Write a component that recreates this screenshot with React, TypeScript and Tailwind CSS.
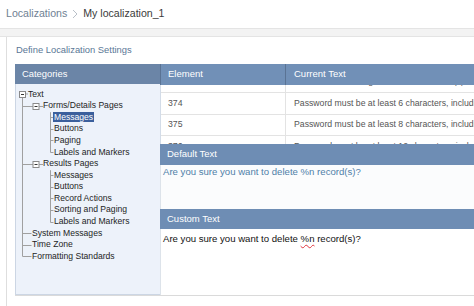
import React from "react";

type Node = { label: string; level: 0 | 1 | 2; expandable?: boolean; selected?: boolean };

const nodes: Node[] = [
  { label: "Text", level: 0, expandable: true },
  { label: "Forms/Details Pages", level: 1, expandable: true },
  { label: "Messages", level: 2, selected: true },
  { label: "Buttons", level: 2 },
  { label: "Paging", level: 2 },
  { label: "Labels and Markers", level: 2 },
  { label: "Results Pages", level: 1, expandable: true },
  { label: "Messages", level: 2 },
  { label: "Buttons", level: 2 },
  { label: "Record Actions", level: 2 },
  { label: "Sorting and Paging", level: 2 },
  { label: "Labels and Markers", level: 2 },
  { label: "System Messages", level: 1 },
  { label: "Time Zone", level: 1 },
  { label: "Formatting Standards", level: 1 },
];

const rows = [
  { id: "373", text: "Value cannot be larger than %n character(s)" },
  { id: "374", text: "Password must be at least 6 characters, including a number" },
  { id: "375", text: "Password must be at least 8 characters, including a number" },
  { id: "376", text: "Password must be at least 12 characters, including a number" },
];

const ROW = 11.6;
const cy = (i: number) => 10 + ROW * i;

const TreeLines: React.FC = () => {
  const stroke = "#a0a0a0";
  const box = (x: number, y: number, key: string) => (
    <g key={key}>
      <rect x={x - 3} y={y - 3} width={6} height={6} fill="#fff" stroke="#8a8a8a" strokeWidth={1} />
      <line x1={x - 1.5} y1={y} x2={x + 1.5} y2={y} stroke="#333" strokeWidth={1} />
    </g>
  );
  const parts: React.ReactNode[] = [];
  // root
  parts.push(<line key="rv" x1={6.5} y1={cy(0) + 3} x2={6.5} y2={cy(14)} stroke={stroke} />);
  parts.push(<line key="rh" x1={9.5} y1={cy(0)} x2={12} y2={cy(0)} stroke={stroke} />);
  nodes.forEach((n, i) => {
    const y = Math.round(cy(i)) + 0.5;
    if (n.level === 1) {
      if (n.expandable) {
        parts.push(<line key={"h" + i} x1={6.5} y1={y} x2={17} y2={y} stroke={stroke} />);
        parts.push(<line key={"hr" + i} x1={23} y1={y} x2={27} y2={y} stroke={stroke} />);
      } else {
        parts.push(<line key={"h" + i} x1={6.5} y1={y} x2={15.5} y2={y} stroke={stroke} />);
      }
    }
    if (n.level === 2) {
      parts.push(<line key={"h" + i} x1={34.5} y1={y} x2={37.5} y2={y} stroke={stroke} />);
    }
  });
  parts.push(<line key="v1" x1={34.5} y1={cy(2) - 5} x2={34.5} y2={Math.round(cy(5)) + 0.5} stroke={stroke} />);
  parts.push(<line key="v2" x1={34.5} y1={cy(7) - 5} x2={34.5} y2={Math.round(cy(11)) + 0.5} stroke={stroke} />);
  parts.push(box(6.5, Math.round(cy(0)) + 0.5, "b0"));
  parts.push(box(20, Math.round(cy(1)) + 0.5, "b1"));
  parts.push(box(20, Math.round(cy(6)) + 0.5, "b6"));
  return (
    <svg className="absolute left-0 top-0 pointer-events-none" width={145} height={211}>
      {parts}
    </svg>
  );
};

const indent = (n: Node) => {
  if (n.level === 0) return "pl-[12px]";
  if (n.level === 1) return n.expandable ? "pl-[27px]" : "pl-[16px]";
  return "pl-[37px]";
};

const App: React.FC = () => {
  return (
    <div className="w-[474px] h-[306px] bg-white overflow-hidden flex flex-col font-['Liberation_Sans',Arial,sans-serif]">
      {/* breadcrumb */}
      <div className="h-[28px] flex items-center pl-[6px] text-[10.6px] shrink-0">
        <span className="text-[#6f8193]">Localizations</span>
        <svg width="6" height="10" viewBox="0 0 6 10" className="mx-[5px]">
          <polyline points="1,1 5,5 1,9" fill="none" stroke="#b9c0c8" strokeWidth="1" />
        </svg>
        <span className="text-[#3b3b3b]">My localization_1</span>
      </div>
      <div className="h-[9px] shrink-0 bg-[#f3f3f3] border-y border-[#e4e4e4]" />

      {/* panel */}
      <div className="flex-1 ml-[6px] border-l border-[#dedede] flex flex-col">
        <div className="h-[27px] flex items-center pl-[9px] text-[9.4px] text-[#5a7796]">
          Define Localization Settings
        </div>
        <div className="flex ml-[8px] h-[232px] border-b border-[#dadada]">
          {/* categories */}
          <div className="w-[145px] flex flex-col">
            <div className="h-[20px] bg-[#6b85a7] text-white text-[9.4px] flex items-center pl-[7px]">
              Categories
            </div>
            <div className="relative flex-1 bg-[#edf2fa] border-l border-b border-[#ccd6e4] pt-[4.2px] text-[8.6px] text-[#1e1e1e]">
              <TreeLines />
              {nodes.map((n, i) => (
                <div key={i} className={`relative h-[11.6px] flex items-center whitespace-nowrap ${indent(n)}`}>
                  {n.selected ? (
                    <span className="bg-[#3b5f9c] text-white px-[1px] leading-[10.5px]">{n.label}</span>
                  ) : (
                    <span className={n.level === 2 ? "pl-[1px]" : ""}>{n.label}</span>
                  )}
                </div>
              ))}
            </div>
          </div>

          {/* right side */}
          <div className="flex-1 flex flex-col min-w-0">
            <div className="h-[21px] bg-[#7190b7] text-white text-[9.5px] flex border-l border-[#5a7394]">
              <div className="w-[124px] flex items-center pl-[7px]">Element</div>
              <div className="flex-1 flex items-center pl-[8px] border-l border-[#5a7394]">Current Text</div>
            </div>
            <div className="h-[59px] overflow-hidden bg-white border-l border-[#d3dce8]">
              <div className="-mt-[13.5px]">
                {rows.map((r) => (
                  <div key={r.id} className="h-[21.5px] flex border-b border-[#e3e3e3] text-[8.7px] text-[#555]">
                    <div className="w-[124px] flex items-center pl-[7px]">{r.id}</div>
                    <div className="flex-1 flex items-center pl-[8px] border-l border-[#e3e3e3] whitespace-nowrap overflow-hidden">
                      {r.text}
                    </div>
                  </div>
                ))}
              </div>
            </div>
            <div className="h-[21px] bg-[#6e8db4] text-white text-[9.5px] flex items-center pl-[7px]">
              Default Text
            </div>
            <div className="h-[44px] bg-[#fbfcfd] border-l border-[#dde3ea] text-[9.6px] text-[#4f80a8] pl-[2px] pt-[1px] leading-[12px]">
              Are you sure you want to delete %n record(s)?
            </div>
            <div className="h-[20px] bg-[#6e8db4] text-white text-[9.5px] flex items-center pl-[7px]">
              Custom Text
            </div>
            <div className="flex-1 bg-white border-l border-[#dde3ea] text-[9.6px] text-[#111] pl-[2px] pt-[4px] leading-[12px]">
              Are you sure you want to delete{" "}
              <span className="underline decoration-wavy decoration-[#e0343c] decoration-1 underline-offset-2">%n</span>{" "}
              record(s)?
            </div>
          </div>
        </div>
      </div>
    </div>
  );
};

export default App;
